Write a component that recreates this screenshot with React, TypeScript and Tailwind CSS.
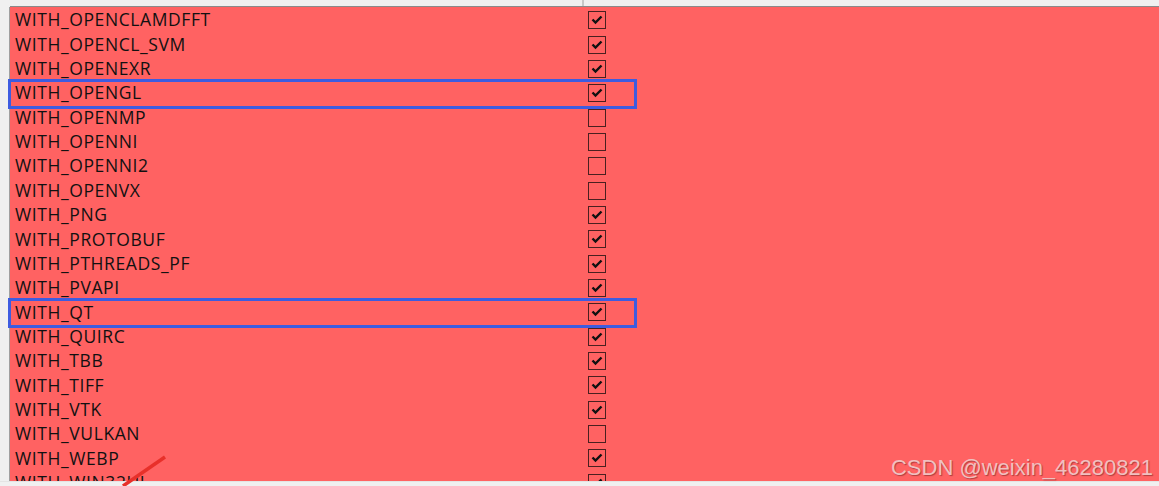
import React from "react";

type Item = { name: string; on: boolean };

const items: Item[] = [
  { name: "WITH_OPENCLAMDFFT", on: true },
  { name: "WITH_OPENCL_SVM", on: true },
  { name: "WITH_OPENEXR", on: true },
  { name: "WITH_OPENGL", on: true },
  { name: "WITH_OPENMP", on: false },
  { name: "WITH_OPENNI", on: false },
  { name: "WITH_OPENNI2", on: false },
  { name: "WITH_OPENVX", on: false },
  { name: "WITH_PNG", on: true },
  { name: "WITH_PROTOBUF", on: true },
  { name: "WITH_PTHREADS_PF", on: true },
  { name: "WITH_PVAPI", on: true },
  { name: "WITH_QT", on: true },
  { name: "WITH_QUIRC", on: true },
  { name: "WITH_TBB", on: true },
  { name: "WITH_TIFF", on: true },
  { name: "WITH_VTK", on: true },
  { name: "WITH_VULKAN", on: false },
  { name: "WITH_WEBP", on: true },
  { name: "WITH_WIN32UI", on: true },
];

function Check({ on }: { on: boolean }) {
  return (
    <div className="w-[18px] h-[18px] border-[1.5px] border-[#4a2020] flex items-center justify-center">
      {on && (
        <svg width="12" height="10" viewBox="0 0 12 10">
          <path d="M1.5 4.5 L4.5 7.5 L10.5 1.5" fill="none" stroke="#111" strokeWidth="2.4" />
        </svg>
      )}
    </div>
  );
}

export default function App() {
  return (
    <div className="relative w-[1159px] h-[486px] overflow-hidden bg-[#f0f0f0] font-['Open_Sans',sans-serif]">
      {/* header */}
      <div className="flex h-[7px] border-b border-[#8a8a8a] ml-[10px]">
        <div className="w-[574px] border-r-2 border-[#c8c8c8]" />
        <div className="flex-1" />
      </div>

      {/* list */}
      <div className="flex h-[474px]">
        <div className="w-[10px] border-r border-[#a0a0a0]" />
        <div className="flex-1 bg-[#ff6262] overflow-hidden pt-[1px]">
          {items.map((it) => (
            <div key={it.name} className="flex items-center h-[24.35px]">
              <div className="w-[578px] pl-[5px] text-[17.5px] leading-none text-[#111] tracking-[0.6px]">{it.name}</div>
              <Check on={it.on} />
            </div>
          ))}
        </div>
      </div>
      <div className="h-[1px] bg-[#e4e4e4]" />

      {/* highlight boxes */}
      <div className="absolute left-[8px] top-[79px] w-[629px] h-[30px] border-[3px] border-[#3d5ce0]" />
      <div className="absolute left-[8px] top-[298px] w-[629px] h-[30px] border-[3px] border-[#3d5ce0]" />

      {/* arrow */}
      <svg className="absolute left-[115px] top-[455px]" width="60" height="31" viewBox="0 0 60 31">
        <path d="M50 2 L8 31" stroke="#e8302a" strokeWidth="3.5" />
      </svg>

      {/* watermark */}
      <div className="absolute right-[6px] top-[451px] text-[22px] text-[#f0c0c0] font-['Liberation_Sans',sans-serif] [text-shadow:1px_1px_1px_rgba(120,40,40,0.6)]">
        CSDN @weixin_46280821
      </div>
    </div>
  );
}
